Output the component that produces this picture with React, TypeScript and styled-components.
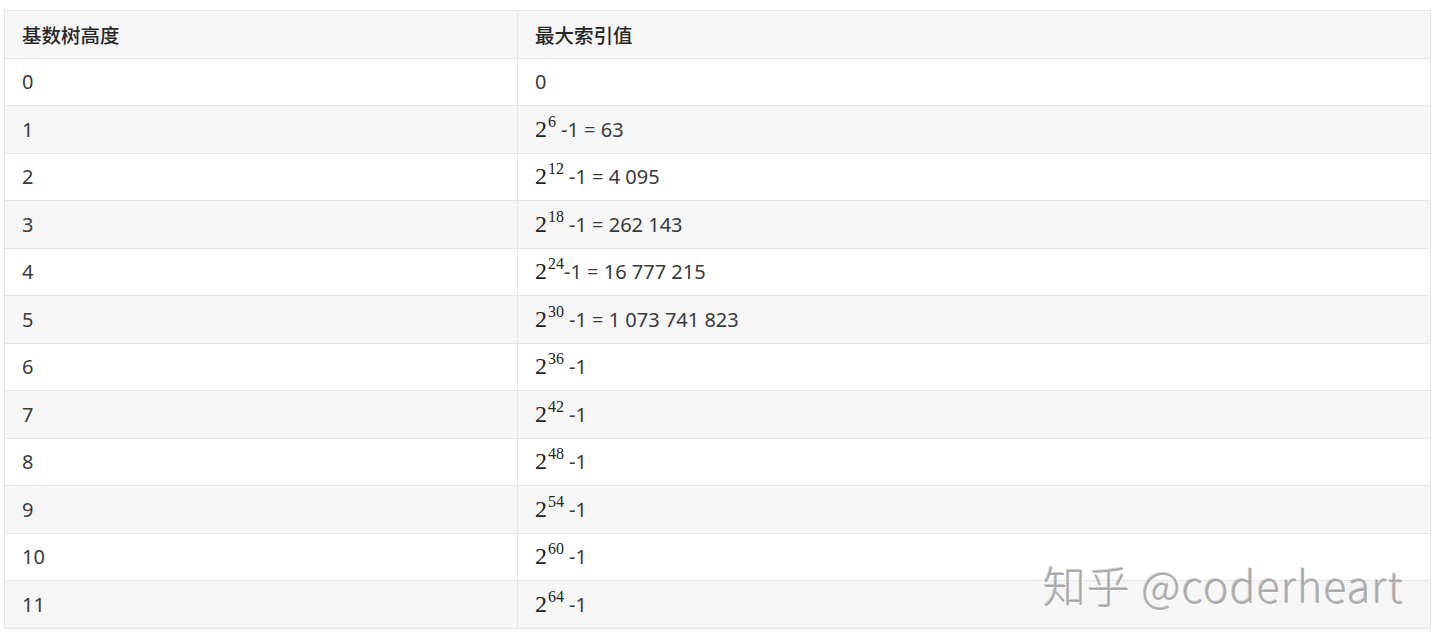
import React from 'react';
import styled, { createGlobalStyle } from 'styled-components';

const GlobalStyle = createGlobalStyle`
  html, body {
    margin: 0;
    padding: 0;
    background: #ffffff;
  }
  body {
    font-family: "Noto Sans", "Noto Sans CJK SC", sans-serif;
    color: #3a3a3a;
  }
`;

const Page = styled.div`
  position: relative;
  padding: 10px 10px 0 4px;
`;

const Table = styled.table`
  width: 1427px;
  border-collapse: collapse;
  table-layout: fixed;
  font-size: 20px;
  border: 1px solid #e5e5e5;
`;

const Row = styled.tr<{ $shaded: boolean }>`
  height: 47.5px;
  background: ${({ $shaded }) => ($shaded ? '#f6f6f6' : '#ffffff')};
`;

const HeadCell = styled.th`
  text-align: left;
  font-weight: 500;
  font-size: 19.5px;
  padding: 0 17px;
  border: 1px solid #e5e5e5;
  color: #262626;
  font-family: "Noto Sans CJK SC", "Noto Sans", sans-serif;
`;

const Cell = styled.td`
  padding: 0 17px;
  border: 1px solid #e5e5e5;
  vertical-align: middle;
`;

const Math = styled.span<{ $tight?: boolean }>`
  font-family: "Liberation Serif", "DejaVu Serif", serif;
  font-size: 24px;
  color: #222;
  margin-right: ${({ $tight }) => ($tight ? '0' : '5px')};
`;

const Sup = styled.sup`
  font-size: 16px;
  vertical-align: 0;
  position: relative;
  top: -10px;
  margin-left: 1px;
`;

const Watermark = styled.div`
  position: absolute;
  left: 1043px;
  top: 553px;
  font-size: 43px;
  letter-spacing: 1px;
  color: rgba(150, 150, 150, 0.75);
  text-shadow: 1px 1px 0 rgba(255, 255, 255, 0.9), -1px -1px 0 rgba(120, 120, 120, 0.35);
  font-family: "Noto Sans CJK SC", "Noto Sans", sans-serif;
  font-weight: 300;
  pointer-events: none;
  white-space: nowrap;
`;

const rows = [
  { h: '0', exp: null, rest: '0' },
  { h: '1', exp: '6', rest: '-1 = 63' },
  { h: '2', exp: '12', rest: '-1 = 4 095' },
  { h: '3', exp: '18', rest: '-1 = 262 143' },
  { h: '4', exp: '24', rest: '-1 = 16 777 215', tight: true },
  { h: '5', exp: '30', rest: '-1 = 1 073 741 823' },
  { h: '6', exp: '36', rest: '-1' },
  { h: '7', exp: '42', rest: '-1' },
  { h: '8', exp: '48', rest: '-1' },
  { h: '9', exp: '54', rest: '-1' },
  { h: '10', exp: '60', rest: '-1' },
  { h: '11', exp: '64', rest: '-1' },
];

export default function App() {
  return (
    <Page>
      <GlobalStyle />
      <Table>
        <colgroup>
          <col style={{ width: 513 }} />
          <col />
        </colgroup>
        <thead>
          <Row $shaded>
            <HeadCell>基数树高度</HeadCell>
            <HeadCell>最大索引值</HeadCell>
          </Row>
        </thead>
        <tbody>
          {rows.map((r, i) => (
            <Row key={r.h} $shaded={i % 2 === 1}>
              <Cell>{r.h}</Cell>
              <Cell>
                {r.exp ? (
                  <>
                    <Math $tight={r.tight}>
                      2<Sup>{r.exp}</Sup>
                    </Math>
                    {r.rest}
                  </>
                ) : (
                  r.rest
                )}
              </Cell>
            </Row>
          ))}
        </tbody>
      </Table>
      <Watermark>知乎 @coderheart</Watermark>
    </Page>
  );
}
